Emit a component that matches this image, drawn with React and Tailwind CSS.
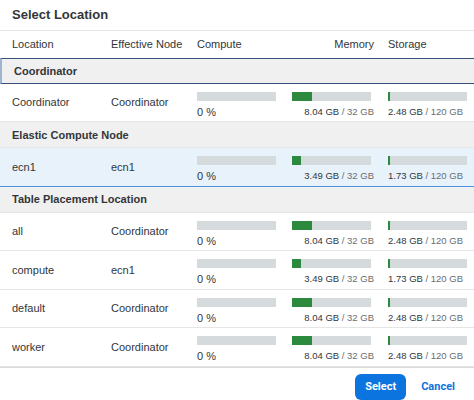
import React from "react";

const F = { fontFamily: '"Liberation Sans", Arial, sans-serif' };

function Bar({ pct, fill }) {
  return (
    <div className="h-[9px] w-[79px] bg-[#d5dadd] flex">
      {fill ? <div className="h-full bg-[#2b8a3e]" style={{ width: pct }} /> : null}
    </div>
  );
}

function Row({ loc, node, mem, memFill, sto, stoFill, selected }) {
  return (
    <div
      className={
        "grid grid-cols-[99px_86px_92px_99px_78px] pl-3 h-[39px] border-b " +
        (selected ? "bg-[#e8f2fb] border-[#4a94dc]" : "bg-white border-[#e5e5e5]")
      }
    >
      <div className="flex items-center text-[11px] text-[#32363a]">{loc}</div>
      <div className="flex items-center text-[11px] text-[#32363a]">{node}</div>
      <div className="flex flex-col pt-[8px]">
        <Bar pct="0%" />
        <div className="mt-[3px] leading-[16px] text-[11px] text-[#32363a]">0 %</div>
      </div>
      <div className="flex flex-col pt-[8px] pl-[3px]">
        <Bar pct={memFill} fill />
        <div className="mt-[3px] leading-[16px] text-[9.5px] text-right pr-[14px] text-[#32363a]">
          {mem} <span className="text-[#6a6d70]">/ 32 GB</span>
        </div>
      </div>
      <div className="flex flex-col pt-[8px]">
        <Bar pct={stoFill} fill />
        <div className="mt-[3px] leading-[16px] text-[9.5px] text-[#32363a]">
          {sto} <span className="text-[#6a6d70]">/ 120 GB</span>
        </div>
      </div>
    </div>
  );
}

function Group({ title, focused }) {
  return (
    <div
      className={
        "h-[26px] flex items-center pl-3 bg-[#f0f0f0] text-[11px] font-bold text-[#32363a] " +
        (focused ? "border-y border-[#38507a] border-l-2 border-l-[#9fb3d3]" : "border-b border-[#e5e5e5]")
      }
    >
      {title}
    </div>
  );
}

export default function App() {
  return (
    <div style={F} className="w-[474px] h-[400px] bg-white overflow-hidden flex flex-col">
      <div className="h-[31px] flex items-center pl-3 text-[13px] font-bold text-[#32363a] border-b border-[#e5e5e5] shrink-0">
        Select Location
      </div>
      <div className="grid grid-cols-[99px_86px_92px_99px_78px] pl-3 h-[27px] items-center text-[11px] text-[#32363a] shrink-0">
        <div>Location</div>
        <div>Effective Node</div>
        <div>Compute</div>
        <div className="text-right pr-[14px]">Memory</div>
        <div>Storage</div>
      </div>
      <Group title="Coordinator" focused />
      <Row loc="Coordinator" node="Coordinator" mem="8.04 GB" memFill="25%" sto="2.48 GB" stoFill="3%" />
      <Group title="Elastic Compute Node" />
      <Row loc="ecn1" node="ecn1" mem="3.49 GB" memFill="11%" sto="1.73 GB" stoFill="3%" selected />
      <Group title="Table Placement Location" />
      <Row loc="all" node="Coordinator" mem="8.04 GB" memFill="25%" sto="2.48 GB" stoFill="3%" />
      <Row loc="compute" node="ecn1" mem="3.49 GB" memFill="11%" sto="1.73 GB" stoFill="3%" />
      <Row loc="default" node="Coordinator" mem="8.04 GB" memFill="25%" sto="2.48 GB" stoFill="3%" />
      <Row loc="worker" node="Coordinator" mem="8.04 GB" memFill="25%" sto="2.48 GB" stoFill="3%" />
      <div className="flex-1 border-t border-[#d9d9d9] flex items-start justify-end pt-[6px] pr-[19px] gap-[15px]">
        <button
          style={{ fontFamily: 'Roboto, "Liberation Sans", sans-serif' }}
          className="h-[26px] w-[51px] rounded-[6px] bg-[#0b74de] text-white text-[11px] font-bold flex items-center justify-center"
        >
          Select
        </button>
        <button
          style={{ fontFamily: 'Roboto, "Liberation Sans", sans-serif' }}
          className="h-[26px] text-[#0b74de] text-[11px] font-bold flex items-center"
        >
          Cancel
        </button>
      </div>
    </div>
  );
}
